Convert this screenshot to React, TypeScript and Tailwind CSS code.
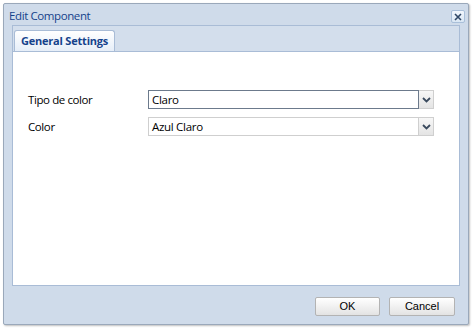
import React from "react";

const Chevron = () => (
  <svg width="9" height="6" viewBox="0 0 9 6">
    <path d="M1 1 L4.5 4.5 L8 1" fill="none" stroke="#3a4a5e" strokeWidth="1.8" />
  </svg>
);

function Combo({ value, focused }: { value: string; focused?: boolean }) {
  return (
    <div className="flex h-[19px]">
      <div
        className={
          "w-[271px] h-full bg-white border flex items-center pl-[3px] text-[11.5px] tracking-[-0.3px] text-black " +
          (focused ? "border-[#6c7a8c]" : "border-[#cfcfcf]")
        }
      >
        {value}
      </div>
      <div className="w-[15px] h-full border border-l-0 border-[#cfcfcf] bg-gradient-to-b from-[#f7f7f7] to-[#e4e4e4] flex items-center justify-center">
        <Chevron />
      </div>
    </div>
  );
}

export default function App() {
  return (
    <div
      className="w-[474px] h-[328px] bg-white pt-[3px] pl-[3px]"
      style={{ fontFamily: '"Open Sans", "Liberation Sans", Arial, sans-serif' }}
    >
      <div className="w-[466px] h-[322px] border border-[#9aa8ba] rounded-[2px] bg-[#cfdbea] flex flex-col shadow-[1px_1px_2px_rgba(0,0,0,0.25)]">
        {/* title bar */}
        <div className="h-[21px] flex items-center justify-between pl-[5px] pr-[3px]">
          <span className="text-[11.5px] tracking-[-0.4px] text-[#15428b] leading-none pt-[2px]">Edit Component</span>
          <div className="w-[14px] h-[13px] mt-[4px] rounded-[2px] border border-[#a9bfd9] bg-gradient-to-b from-[#f2f7fd] to-[#d9e6f4] flex items-center justify-center">
            <svg width="8" height="8" viewBox="0 0 8 8">
              <path d="M1 1 L7 7 M7 1 L1 7" stroke="#2f4766" strokeWidth="1.6" />
            </svg>
          </div>
        </div>
        {/* content */}
        <div className="px-[8px] flex flex-col">
          {/* tab strip */}
          <div className="h-[26px] border-t border-r border-l border-[#a9bcd6] bg-[#d3deec] flex items-end pl-[1px]">
            <div className="h-[21px] w-[101px] border border-b-0 border-[#a9bcd6] rounded-t-[3px] bg-gradient-to-b from-white to-[#e6eef8] flex items-center justify-center">
              <span className="text-[11px] font-bold text-[#15428b] tracking-[-0.2px]">General Settings</span>
            </div>
          </div>
          {/* panel body */}
          <div className="h-[235px] bg-white border border-[#a9bcd6] pt-[38px] pl-[15px] flex flex-col gap-[8px]">
            <div className="flex items-center">
              <span className="w-[120px] text-[11.5px] tracking-[-0.4px] text-black">Tipo de color</span>
              <Combo value="Claro" focused />
            </div>
            <div className="flex items-center">
              <span className="w-[120px] text-[11.5px] tracking-[-0.4px] text-black">Color</span>
              <Combo value="Azul Claro" />
            </div>
          </div>
        </div>
        {/* footer */}
        <div className="flex justify-end gap-[9px] pr-[13px] pt-[11px]">
          <button
            className="w-[65px] h-[19px] border border-[#b3b3b3] rounded-[2px] bg-gradient-to-b from-white to-[#e3e3e3] text-[11px] text-black"
            style={{ fontFamily: '"Liberation Sans", Arial, sans-serif' }}
          >
            OK
          </button>
          <button
            className="w-[66px] h-[19px] border border-[#b3b3b3] rounded-[2px] bg-gradient-to-b from-white to-[#e3e3e3] text-[11px] text-black"
            style={{ fontFamily: '"Liberation Sans", Arial, sans-serif' }}
          >
            Cancel
          </button>
        </div>
      </div>
    </div>
  );
}
